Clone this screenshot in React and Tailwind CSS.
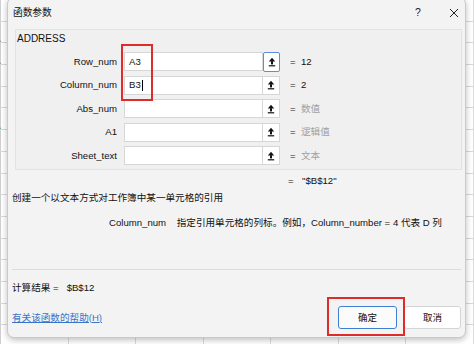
import React from "react";

const font = { fontFamily: '"Liberation Sans", "Noto Sans CJK SC", sans-serif' };

function RefIcon() {
  return (
    <svg width="8" height="10" viewBox="0 0 8 10">
      <polygon points="4,0.8 0.8,4.6 7.2,4.6" fill="#111" />
      <rect x="3" y="4.2" width="2" height="3.2" fill="#111" />
      <rect x="0.8" y="8.2" width="6.4" height="1.2" fill="#111" />
    </svg>
  );
}

function ArgRow({ label, value, result, grey, focused }) {
  return (
    <div className="flex items-center h-[19px]">
      <div className="w-[101px] text-right text-[#111] leading-none">{label}</div>
      <div className="ml-[7px] w-[139px] h-[19px] bg-white border border-[#d6d6d6] flex items-center pl-[4px] text-[#111] leading-none">
        {value}
      </div>
      <div
        className={
          focused
            ? "w-[17px] h-[20px] bg-white border border-[#5b8fd6] rounded-[2px] flex items-center justify-center"
            : "w-[17px] h-[19px] bg-white border border-[#d6d6d6] border-l-0 flex items-center justify-center"
        }
      >
        <RefIcon />
      </div>
      <div className="ml-[10px] w-[11px] text-[#222] leading-none">=</div>
      <div className={grey ? "text-[#a0a0a0] leading-none" : "text-[#111] leading-none"}>{result}</div>
    </div>
  );
}

export default function App() {
  const rows = Array.from({ length: 16 });
  const cols = Array.from({ length: 8 });
  return (
    <div className="relative w-[474px] h-[344px] bg-white overflow-hidden text-[9.6px]" style={font}>
      {/* spreadsheet behind */}
      <div className="absolute inset-0 flex flex-col">
        <div className="h-[3px]" />
        {rows.map((_, i) => (
          <div key={i} className="flex h-[21.7px] border-b border-[#d8d8d8] shrink-0">
            <div
              className={
                i === 1 || i === 2 || i === 5
                  ? "w-[10px] border-r border-[#cfcfcf] border-b-2 border-b-[#5a9c72] bg-[#f4f4f4]"
                  : "w-[10px] border-r border-[#cfcfcf] bg-[#f4f4f4]"
              }
            />
            {cols.map((_, j) => (
              <div key={j} className="w-[67.5px] border-r border-[#dadada] shrink-0" />
            ))}
          </div>
        ))}
      </div>

      {/* dialog */}
      <div className="absolute left-[7px] top-[-3px] w-[459px] h-[341px] bg-[#f3f3f3] border border-[#c9c9c9] rounded-[7px] shadow-[0_2px_6px_rgba(0,0,0,0.25)] flex flex-col">
        <div className="h-[27px] shrink-0 flex items-center pt-[2px]">
          <div className="pl-[5px] text-[#111] text-[9.7px] leading-none">函数参数</div>
          <div className="flex-1" />
          <div className="w-[12px] text-center text-[#222] text-[10.5px] leading-none">?</div>
          <div className="w-[24px]" />
          <div className="w-[12px] flex items-center justify-center">
            <svg width="10" height="10" viewBox="0 0 10 10">
              <path d="M1 1 L9 9 M9 1 L1 9" stroke="#222" strokeWidth="1" />
            </svg>
          </div>
          <div className="w-[5px]" />
        </div>

        {/* group box */}
        <div className="ml-[7px] mr-[3px] mt-[4px] h-[141px] shrink-0 border border-[#e2e2e2] bg-[#f0f0f0] flex flex-col">
          <div className="h-[14px] mt-[2px] pl-[1px] flex items-center text-[#111] text-[10px] leading-none">ADDRESS</div>
          <div className="mt-[6px] flex flex-col gap-[4.5px]">
            <ArgRow label="Row_num" value="A3" result="12" focused />
            <ArgRow label="Column_num" value={<span>B3<span className="inline-block w-[1px] h-[11px] bg-black align-middle ml-[1px]" /></span>} result="2" />
            <ArgRow label="Abs_num" value="" result="数值" grey />
            <ArgRow label="A1" value="" result="逻辑值" grey />
            <ArgRow label="Sheet_text" value="" result="文本" grey />
          </div>
        </div>

        <div className="mt-[5px] h-[12px] flex items-center pl-[280px] text-[#111] leading-none">
          <span className="w-[14px]">=</span>
          <span>"$B$12"</span>
        </div>
        <div className="mt-[5px] h-[12px] flex items-center pl-[4px] text-[#111] leading-none">
          创建一个以文本方式对工作簿中某一单元格的引用
        </div>
        <div className="mt-[13px] h-[12px] flex items-center pl-[101px] text-[#111] leading-none whitespace-pre">
          {"Column_num    指定引用单元格的列标。例如，Column_number = 4 代表 D 列"}
        </div>

        <div className="mt-[40px] mx-[4px] h-px bg-[#dcdcdc] shrink-0" />

        <div className="mt-[12px] h-[12px] flex items-center pl-[4px] text-[#111] leading-none whitespace-pre">
          {"计算结果 =   $B$12"}
        </div>

        <div className="mt-[12px] flex items-center h-[23px]">
          <a className="pl-[4px] text-[#3a74c8] underline leading-none">有关该函数的帮助(H)</a>
          <div className="flex-1" />
          <button className="w-[59px] h-[23px] bg-[#fbfbfb] border border-[#3f7fd2] rounded-[3px] text-[#111] text-[9.5px] leading-none">
            确定
          </button>
          <button className="ml-[7px] w-[57px] h-[23px] bg-white border border-[#d5d5d5] rounded-[3px] text-[#111] text-[9.5px] leading-none">
            取消
          </button>
          <div className="w-[4px]" />
        </div>
      </div>

      {/* annotation boxes */}
      <div className="absolute left-[121px] top-[44px] w-[32px] h-[57px] border-2 border-[#e02b2b]" />
      <div className="absolute left-[327px] top-[297px] w-[78px] h-[39px] border-2 border-[#e02b2b]" />
    </div>
  );
}
